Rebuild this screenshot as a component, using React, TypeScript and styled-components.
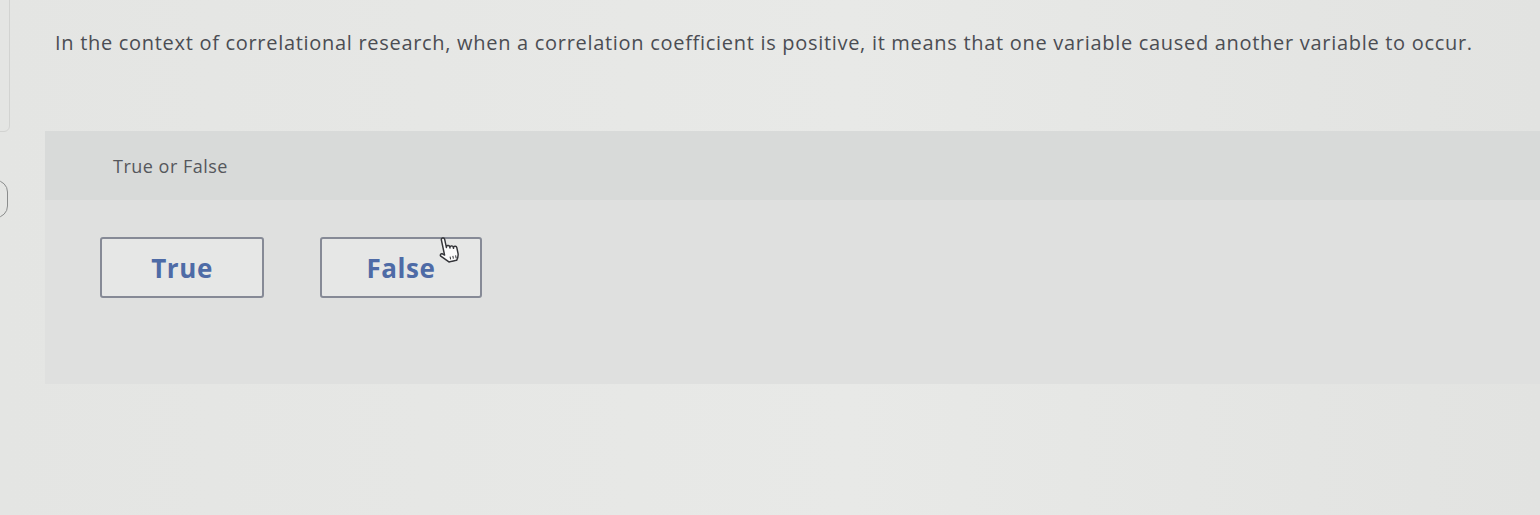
import React from 'react';
import styled, { createGlobalStyle } from 'styled-components';

const GlobalStyle = createGlobalStyle`
  html, body {
    margin: 0;
    padding: 0;
    background: #e5e6e4;
    font-family: "Open Sans", "Liberation Sans", sans-serif;
  }
`;

const Page = styled.div`
  display: flex;
  width: 1540px;
  height: 515px;
  overflow: hidden;
  background: linear-gradient(90deg, #e4e5e3 0%, #e8e9e7 55%, #e2e3e1 100%);
`;

// thin strip of the neighbouring nav column, mostly cut off
const Rail = styled.aside`
  flex: 0 0 10px;
  display: flex;
  flex-direction: column;
  overflow: hidden;
`;

const RailCard = styled.div`
  flex: 0 0 140px;
  width: 22px;
  margin: -10px 0 0 -14px;
  border: 1px solid #d2d3d1;
  border-radius: 6px;
`;

const RailKnob = styled.div`
  flex: 0 0 36px;
  width: 26px;
  margin: 48px 0 0 -20px;
  border: 1.5px solid #8a8c8c;
  border-radius: 12px;
`;

const Main = styled.main`
  flex: 1;
  display: flex;
  flex-direction: column;
`;

const Question = styled.p`
  margin: 0;
  padding: 30px 0 0 45px;
  font-size: 20px;
  line-height: 26px;
  color: #4b4d53;
  letter-spacing: 0.7px;
`;

const Panel = styled.section`
  margin: 75px 0 0 35px;
  background: #dfe0df;
`;

const PanelHeader = styled.div`
  height: 69px;
  display: flex;
  align-items: center;
  padding-left: 68px;
  background: #d8dad9;
  font-size: 18px;
  letter-spacing: 0.5px;
  color: #55575c;
`;

const Choices = styled.div`
  display: flex;
  gap: 56px;
  padding: 37px 0 86px 55px;
`;

const Choice = styled.button<{ $width: number }>`
  position: relative;
  width: ${p => p.$width}px;
  height: 61px;
  background: #e6e7e6;
  border: 2px solid #868a96;
  border-radius: 3px;
  font-family: "Open Sans", "Liberation Sans", sans-serif;
  font-weight: 700;
  font-size: 26px;
  letter-spacing: 0.6px;
  color: #4e6ba6;
  cursor: pointer;
`;

const Pointer = styled.svg`
  position: absolute;
  right: 19px;
  top: -3px;
  transform: rotate(-12deg);
`;

function HandCursor() {
  return (
    <Pointer width="26" height="27" viewBox="0 0 22 24">
      <path
        d="M7 2.5a1.5 1.5 0 0 1 3 0V10a1.5 1.5 0 0 1 3 0v1a1.5 1.5 0 0 1 3 0v1a1.5 1.5 0 0 1 3 0v5q0 3-2.5 6H9.5l-6-6.5a1.3 1.3 0 0 1 1.8-1.8L7 16.2z"
        fill="#fbfbfb"
        stroke="#35363a"
        strokeWidth="1.3"
        strokeLinejoin="round"
      />
      <path d="M11.5 18.5v2.5M14 18.5v2.5M16.5 18.5v2.5" stroke="#35363a" strokeWidth="0.9" />
    </Pointer>
  );
}

export default function App() {
  return (
    <>
      <GlobalStyle />
      <Page>
        <Rail>
          <RailCard />
          <RailKnob />
        </Rail>
        <Main>
          <Question>
            In the context of correlational research, when a correlation coefficient is positive, it means that one variable caused another variable to occur.
          </Question>
          <Panel>
            <PanelHeader>True or False</PanelHeader>
            <Choices>
              <Choice $width={164}>True</Choice>
              <Choice $width={162}>
                False
                <HandCursor />
              </Choice>
            </Choices>
          </Panel>
        </Main>
      </Page>
    </>
  );
}
